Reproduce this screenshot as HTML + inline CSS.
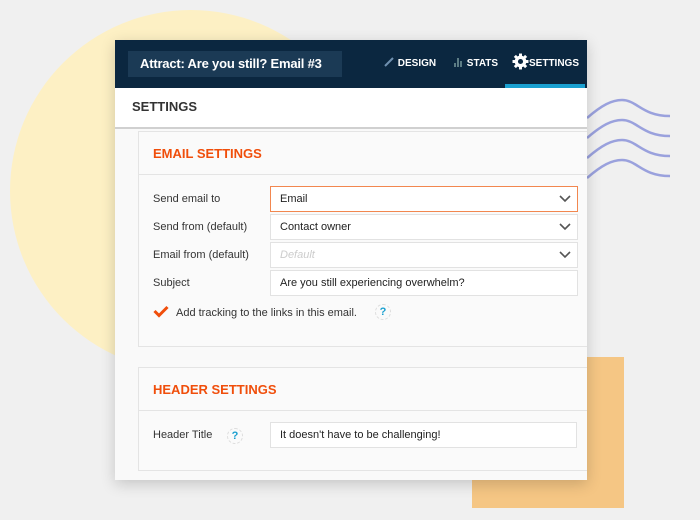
<!DOCTYPE html>
<html><head><meta charset="utf-8"><style>
*{box-sizing:border-box;margin:0;padding:0}
body{width:700px;height:520px;background:#f0f0f0;position:relative;overflow:hidden;font-family:"Liberation Sans",sans-serif;color:#333}
.circle{position:absolute;left:10px;top:10px;width:362px;height:362px;border-radius:50%;background:#fdf0c4}
.rect{position:absolute;left:472px;top:357px;width:152px;height:151px;background:#f5c684}
.panel{position:absolute;left:115px;top:40px;width:472px;height:440px;background:#f9f9f9;box-shadow:0 4px 14px rgba(0,0,0,.18);overflow:hidden}
.top{height:48px;background:#0b2740;position:relative}
.title{position:absolute;left:13px;top:11px;width:214px;height:26px;background:#1b3a55;color:#fff;font-weight:bold;font-size:13px;letter-spacing:-0.2px;white-space:nowrap;line-height:26px;padding-left:12px}
.nav{position:absolute;top:0;height:48px;line-height:48px;color:#fff;font-weight:bold;font-size:10px;white-space:nowrap}
.ul{position:absolute;left:390px;top:44px;width:80px;height:4px;background:#1aa0d0}
.sbar{height:41px;background:#fff;border-bottom:2px solid #d0d0d0;font-weight:bold;font-size:13px;line-height:38px;padding-left:17px;color:#333}
.box{position:absolute;left:23px;width:460px;background:#fafafa;border:1px solid #e4e4e4}
.bh{height:43px;border-bottom:1px solid #e4e4e4;color:#f04e0b;font-weight:bold;font-size:13px;line-height:43px;padding-left:14px}
.lbl{position:absolute;left:14px;font-size:11px;color:#333}
.inp{position:absolute;left:131px;width:308px;height:26px;background:#fff;border:1px solid #e2e2e2;font-size:11px;line-height:24px;padding-left:9px;color:#222}
.chev{position:absolute;right:6px;top:8px}
.q{position:absolute;width:16px;height:16px;border-radius:50%;border:1px dashed #ddd;color:#1aa0d0;font-weight:bold;font-size:11px;text-align:center;line-height:14px}
</style></head><body>
<div class="circle"></div>
<div class="rect"></div>
<svg style="position:absolute;left:587px;top:95px" width="90" height="100" fill="none" stroke="#9aa1dd" stroke-width="2.5">
<path d="M0 23 C15 10,25 5,35 5 C50 5,55 21,83 21"/>
<path d="M0 43 C15 30,25 25,35 25 C50 25,55 41,83 41"/>
<path d="M0 63 C15 50,25 45,35 45 C50 45,55 61,83 61"/>
<path d="M0 83 C15 70,25 65,35 65 C50 65,55 81,83 81"/>
</svg>
<div class="panel">
 <div class="top">
  <div class="title">Attract: Are you still? Email #3</div>
  <div class="nav" style="left:269px"><svg width="11" height="11" style="vertical-align:-1px"><path d="M1 10 L9 2" stroke="#6f90b0" stroke-width="2"/></svg> DESIGN</div>
  <div class="nav" style="left:338px"><svg width="11" height="11" style="vertical-align:-1px"><path d="M2 11V7M5 11V2M8 11V5" stroke="#8aa" stroke-width="1.3"/></svg> STATS</div>
  <div class="nav" style="left:397px"><svg width="17" height="17" viewBox="0 0 16 16" style="vertical-align:-4px"><g fill="#fff"><circle cx="8" cy="8" r="5.5"/><rect x="6.6" y="0.5" width="2.8" height="15"/><rect x="0.5" y="6.6" width="15" height="2.8"/><rect x="6.6" y="0.5" width="2.8" height="15" transform="rotate(45 8 8)"/><rect x="6.6" y="0.5" width="2.8" height="15" transform="rotate(-45 8 8)"/></g><circle cx="8" cy="8" r="2.4" fill="#0b2740"/></svg>SETTINGS</div>
  <div class="ul"></div>
 </div>
 <div class="sbar">SETTINGS</div>
 <div class="box" style="top:91px;height:216px">
  <div class="bh">EMAIL SETTINGS</div>
  <div class="lbl" style="top:61px">Send email to</div>
  <div class="inp" style="top:54px;border-color:#f2874f">Email<svg class="chev" width="12" height="8"><path d="M1 1L6 6L11 1" stroke="#555" stroke-width="1.6" fill="none"/></svg></div>
  <div class="lbl" style="top:89px">Send from (default)</div>
  <div class="inp" style="top:82px">Contact owner<svg class="chev" width="12" height="8"><path d="M1 1L6 6L11 1" stroke="#555" stroke-width="1.6" fill="none"/></svg></div>
  <div class="lbl" style="top:117px">Email from (default)</div>
  <div class="inp" style="top:110px;color:#ccc;font-style:italic">Default<svg class="chev" width="12" height="8"><path d="M1 1L6 6L11 1" stroke="#555" stroke-width="1.6" fill="none"/></svg></div>
  <div class="lbl" style="top:145px">Subject</div>
  <div class="inp" style="top:138px">Are you still experiencing overwhelm?</div>
  <svg style="position:absolute;left:14px;top:173px" width="16" height="13"><path d="M1.5 6L6 10.5L14.5 2" stroke="#f04e0b" stroke-width="3" fill="none"/></svg>
  <div class="lbl" style="left:37px;top:175px">Add tracking to the links in this email.</div>
  <div class="q" style="left:236px;top:172px">?</div>
 </div>
 <div class="box" style="top:327px;height:104px">
  <div class="bh">HEADER SETTINGS</div>
  <div class="lbl" style="top:61px">Header Title</div>
  <div class="q" style="left:88px;top:60px">?</div>
  <div class="inp" style="top:54px;width:307px">It doesn't have to be challenging!</div>
 </div>
</div>
</body></html>
